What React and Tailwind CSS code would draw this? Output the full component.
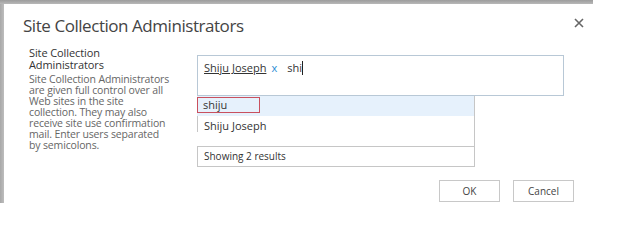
import React from "react";

export default function App() {
  const font = { fontFamily: '"Open Sans", "Noto Sans", sans-serif' };
  const desc = [
    "Site Collection Administrators",
    "are given full control over all",
    "Web sites in the site",
    "collection. They may also",
    "receive site use confirmation",
    "mail. Enter users separated",
    "by semicolons.",
  ];
  return (
    <div className="w-[622px] h-[203px] overflow-hidden bg-white flex flex-col" style={font}>
      <div className="flex h-[4px] shrink-0">
        <div className="w-[593px] h-[4px] bg-gradient-to-b from-[#9c9c9c] to-[#b8b8b8]" />
      </div>
      <div className="flex flex-1">
        <div className="w-[4px] bg-gradient-to-r from-[#a8a8a8] to-[#bdbdbd] shrink-0" />
        <div className="flex-1 flex flex-col">
          <div className="flex items-start pl-[19px] pt-[11px] pr-[38px] h-[43px]">
            <div className="text-[17px] leading-[22px] text-[#444] tracking-[-0.45px]">Site Collection Administrators</div>
            <div className="ml-auto mt-[3px]">
              <svg width="10" height="10" viewBox="0 0 10 10">
                <path d="M1 1 L9 9 M9 1 L1 9" stroke="#666" strokeWidth="1.6" />
              </svg>
            </div>
          </div>
          <div className="flex pl-[25px]">
            <div className="w-[168px] shrink-0">
              <div className="text-[11px] leading-[12px] text-[#333] tracking-[-0.1px]">
                <div>Site Collection</div>
                <div>Administrators</div>
              </div>
              <div className="mt-[3px] text-[10.5px] leading-[11px] text-[#666] tracking-[-0.15px] whitespace-nowrap">
                {desc.map((l) => (
                  <div key={l} className="h-[11px]">{l}</div>
                ))}
              </div>
            </div>
            <div className="flex flex-col mt-[8px]">
              <div className="w-[367px] h-[41px] border border-[#b8c8d6] bg-white flex items-start pl-[6px] pt-[4px] text-[11px] text-[#333]">
                <span className="underline">Shiju Joseph</span>
                <span className="ml-[5px] text-[#2a8dd4]">x</span>
                <span className="ml-[10px]">shi</span>
                <span className="w-px h-[14px] bg-[#222] mt-[1px]" />
              </div>
              <div className="w-[278px] h-[71px] border-r border-b border-[#c6c6c6] flex flex-col">
                <div className="h-[20px] bg-[#e6f1fc] flex items-start">
                  <div className="w-[63px] h-[16px] border-[1.5px] border-[#c9505e] flex items-center pl-[5px] text-[11px] text-[#333] mt-px">shiju</div>
                </div>
                <div className="h-[16px] border-l border-[#c6c6c6] pl-[6px] text-[11px] leading-[20px] text-[#333]">Shiju Joseph</div>
                <div className="flex-1" />
                <div className="h-[20px] border-t border-l border-[#c6c6c6] pl-[6px] flex items-center text-[10px] text-[#333]">Showing 2 results</div>
              </div>
              <div className="flex justify-end gap-[13px] mt-[13px] w-[377px]">
                <div className="w-[61px] h-[22px] border border-[#c8c8c8] flex items-center justify-center text-[10px] text-[#444]">OK</div>
                <div className="w-[61px] h-[22px] border border-[#c8c8c8] flex items-center justify-center text-[10px] text-[#444]">Cancel</div>
              </div>
            </div>
          </div>
        </div>
      </div>
    </div>
  );
}
